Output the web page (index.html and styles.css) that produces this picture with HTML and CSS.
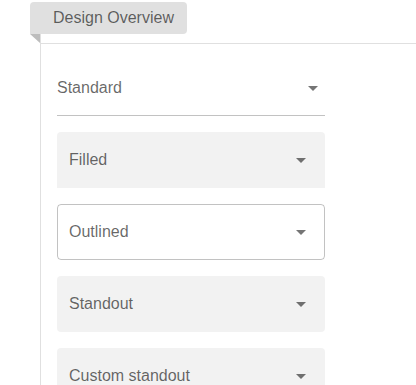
FILE: index.html
```html
<!DOCTYPE html>
<html>
<head>
<meta charset="utf-8">
<link rel="stylesheet" href="styles.css">
</head>
<body>
<div class="page">
  <div class="tab-wrap">
    <div class="tab">Design Overview</div>
  </div>
  <div class="panel">
    <div class="panel-body">
      <div class="field standard"><span class="label">Standard</span><svg class="arrow" viewBox="0 0 24 24"><path d="M7 10l5 5 5-5z"/></svg></div>
      <div class="field filled"><span class="label">Filled</span><svg class="arrow" viewBox="0 0 24 24"><path d="M7 10l5 5 5-5z"/></svg></div>
      <div class="field outlined"><span class="label">Outlined</span><svg class="arrow" viewBox="0 0 24 24"><path d="M7 10l5 5 5-5z"/></svg></div>
      <div class="field standout"><span class="label">Standout</span><svg class="arrow" viewBox="0 0 24 24"><path d="M7 10l5 5 5-5z"/></svg></div>
      <div class="field standout"><span class="label">Custom standout</span><svg class="arrow" viewBox="0 0 24 24"><path d="M7 10l5 5 5-5z"/></svg></div>
    </div>
  </div>
</div>
</body>
</html>
```

FILE: styles.css
```css
html, body {
  margin: 0;
  padding: 0;
  background: #fff;
  overflow: hidden;
}
body {
  font-family: "Liberation Sans", Arial, sans-serif;
  height: 385px;
}
.page {
  padding: 2px 0 0 30px;
}
.tab-wrap {
  position: relative;
  display: inline-block;
}
.tab {
  height: 32px;
  line-height: 31px;
  padding: 0 13px 0 23px;
  background: #e0e0e0;
  color: rgba(0, 0, 0, 0.6);
  font-size: 16px;
  border-radius: 4px 4px 4px 0;
}
.tab-wrap::after {
  content: "";
  position: absolute;
  left: 0;
  top: 32px;
  width: 0;
  height: 0;
  border-top: 9px solid #bdbdbd;
  border-left: 10px solid transparent;
}
.panel {
  margin-left: 10px;
  border-left: 1px solid #e0e0e0;
  padding-top: 9px;
  height: 400px;
}
.panel-body {
  border-top: 1px solid #e0e0e0;
  padding: 16px;
  display: flex;
  flex-direction: column;
  gap: 16px;
}
.field {
  width: 268px;
  height: 56px;
  box-sizing: border-box;
  display: flex;
  align-items: center;
  color: rgba(0, 0, 0, 0.6);
  font-size: 16px;
  padding: 0 12px;
  flex: none;
}
.arrow {
  width: 24px;
  height: 24px;
  fill: rgba(0, 0, 0, 0.54);
  margin-left: auto;
  flex: none;
}
.standard {
  padding: 0;
  border-bottom: 1px solid rgba(0, 0, 0, 0.24);
}
.filled {
  background: rgba(0, 0, 0, 0.05);
  border-radius: 4px 4px 0 0;
}
.outlined {
  border: 1px solid rgba(0, 0, 0, 0.24);
  border-radius: 4px;
  padding: 0 11px;
}
.standout {
  background: rgba(0, 0, 0, 0.05);
  border-radius: 4px;
}
```
